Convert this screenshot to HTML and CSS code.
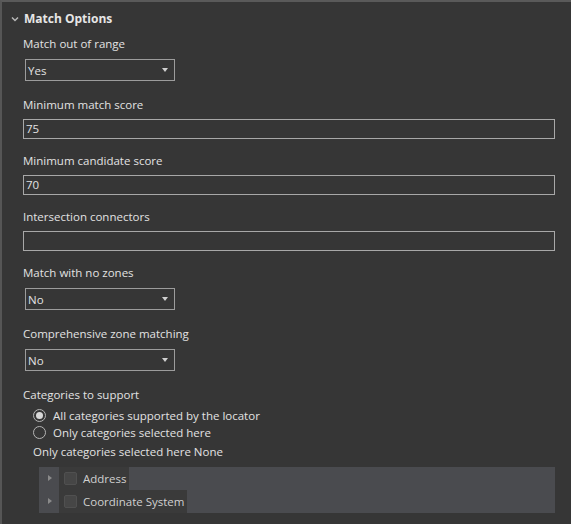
FILE: index.html
```html
<!DOCTYPE html>
<html>
<head>
<meta charset="utf-8">
<link rel="stylesheet" href="styles.css">
</head>
<body>
<div class="panel">
  <div class="header">
    <svg class="chev" width="8" height="6" viewBox="0 0 8 6"><path d="M1 1.5 L4 4.5 L7 1.5" fill="none" stroke="#b8b8b8" stroke-width="1.5"/></svg>
    <span class="title">Match Options</span>
  </div>
  <div class="body">
    <div class="field">
      <div class="label">Match out of range</div>
      <div class="select"><span>Yes</span><i class="arrow"></i></div>
    </div>
    <div class="field text">
      <div class="label">Minimum match score</div>
      <div class="input">75</div>
    </div>
    <div class="field text">
      <div class="label">Minimum candidate score</div>
      <div class="input">70</div>
    </div>
    <div class="field text">
      <div class="label">Intersection connectors</div>
      <div class="input"></div>
    </div>
    <div class="field">
      <div class="label">Match with no zones</div>
      <div class="select"><span>No</span><i class="arrow"></i></div>
    </div>
    <div class="field">
      <div class="label">Comprehensive zone matching</div>
      <div class="select"><span>No</span><i class="arrow"></i></div>
    </div>
    <div class="field cats">
      <div class="label">Categories to support</div>
      <div class="radios">
        <div class="radio checked"><span class="dot"></span>All categories supported by the locator</div>
        <div class="radio"><span class="dot"></span>Only categories selected here</div>
      </div>
      <div class="sublabel">Only categories selected here None</div>
      <div class="tree">
        <div class="row"><span class="exp"></span><span class="item"><span class="cb"></span>Address</span></div>
        <div class="row"><span class="exp"></span><span class="item"><span class="cb"></span>Coordinate System</span></div>
      </div>
    </div>
  </div>
</div>
</body>
</html>
```

FILE: styles.css
```css
html, body {
  margin: 0;
  padding: 0;
  background: #363636;
}
body {
  font-family: "Open Sans", "Noto Sans", sans-serif;
  font-size: 11.5px;
  color: #e2e2e2;
}
.panel {
  width: 571px;
  height: 524px;
  box-sizing: border-box;
  border-top: 2px solid #5a5a5a;
  border-left: 2px solid #565656;
  background: #363636;
  overflow: hidden;
}
.header {
  display: flex;
  align-items: center;
  height: 33px;
  padding-left: 9px;
  box-sizing: border-box;
  padding-bottom: 1px;
}
.chev { margin-right: 5px; margin-top: 1px; }
.title {
  font-weight: bold;
  font-size: 12px;
  color: #e6e6e6;
}
.body {
  padding-left: 21px;
  width: 532px;
  display: flex;
  flex-direction: column;
}
.field {
  display: flex;
  flex-direction: column;
  align-items: stretch;
  margin-bottom: 14px;
}
.field.text { margin-bottom: 13px; }
.label {
  line-height: 18px;
  height: 18px;
  margin-bottom: 5px;
}
.cats .label { margin-bottom: 3px; }
.select {
  margin: 1px 0 1px 2px;
  width: 150px;
  height: 22px;
  box-sizing: border-box;
  border: 1px solid #9c9c9c;
  display: flex;
  align-items: center;
  justify-content: space-between;
  padding: 0 6px 0 2px;
}
.arrow {
  width: 0; height: 0;
  border-left: 3px solid transparent;
  border-right: 3px solid transparent;
  border-top: 4px solid #d0d0d0;
}
.input {
  height: 20px;
  box-sizing: border-box;
  border: 1px solid #a8a8a8;
  padding-left: 2px;
  line-height: 18px;
}
.radios { padding-left: 10px; }
.radio {
  display: flex;
  align-items: center;
  height: 17px;
}
.dot {
  width: 11px; height: 11px;
  border: 1px solid #b5b5b5;
  border-radius: 50%;
  margin-right: 7px;
  position: relative;
  background: #363636;
}
.radio.checked .dot::after {
  content: "";
  position: absolute;
  left: 2px; top: 2px;
  width: 7px; height: 7px;
  border-radius: 50%;
  background: #d8d8d8;
}
.sublabel {
  padding-left: 10px;
  line-height: 18px;
  margin-top: 2px;
  margin-bottom: 6px;
}
.tree {
  margin-left: 16px;
  background: #4a4b4f;
  height: 46px;
}
.row {
  display: flex;
  height: 23px;
}
.exp {
  width: 20px;
  position: relative;
}
.exp::after {
  content: "";
  position: absolute;
  left: 9px; top: 8px;
  width: 0; height: 0;
  border-top: 3px solid transparent;
  border-bottom: 3px solid transparent;
  border-left: 4px solid #8a8a8a;
}
.item {
  display: flex;
  align-items: center;
  background: #3a3a3a;
  padding-right: 3px;
  color: #d0d0d0;
  font-size: 11.5px;
}
.cb {
  width: 13px; height: 13px;
  box-sizing: border-box;
  border-radius: 2px;
  background: #464646;
  border: 1px solid #505050;
  margin: 0 6px 0 5px;
}
```
